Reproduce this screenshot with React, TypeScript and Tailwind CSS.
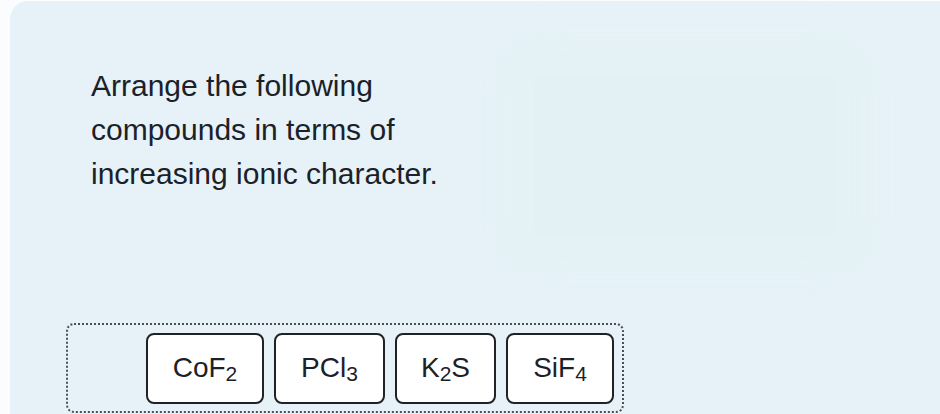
import React from "react";

const chips: { base: string; sub: string; post?: string; w: string }[] = [
  { base: "CoF", sub: "2", w: "w-[118px]" },
  { base: "PCl", sub: "3", w: "w-[111px]" },
  { base: "K", sub: "2", post: "S", w: "w-[101px]" },
  { base: "SiF", sub: "4", w: "w-[108px]" },
];

export default function App() {
  return (
    <div
      className="w-[940px] h-[414px] overflow-hidden bg-[#fbfcfd] pl-[10px] pt-[1px]"
      style={{ fontFamily: "'Liberation Sans', Arial, sans-serif" }}
    >
      <div className="relative w-[960px] h-[440px] bg-[#e6f2f8] rounded-tl-[18px]">
        <div className="absolute left-[485px] top-[35px] w-[380px] h-[240px] bg-[#e3f1f3] rounded-[40px] blur-[16px] opacity-60" />
        <div className="relative pt-[63px] pl-[81px] text-[30px] leading-[44px] text-[#1b2129]">
          <p>Arrange the following</p>
          <p>compounds in terms of</p>
          <p>increasing ionic character.</p>
        </div>
        <div className="relative mt-[127px] ml-[56px] w-[558px] h-[90px] border-2 border-dotted border-[#4a4f55] rounded-[8px] flex justify-end items-center gap-[10px] pr-[8px]">
          {chips.map((c, i) => (
            <div
              key={i}
              className={`${c.w} h-[71px] bg-white border-2 border-[#1f2328] rounded-[8px] flex items-center justify-center text-[28px] text-[#1b2129]`}
            >
              <span>
                {c.base}
                <sub className="text-[21px] relative top-[4px] align-baseline">{c.sub}</sub>
                {c.post}
              </span>
            </div>
          ))}
        </div>
      </div>
    </div>
  );
}
